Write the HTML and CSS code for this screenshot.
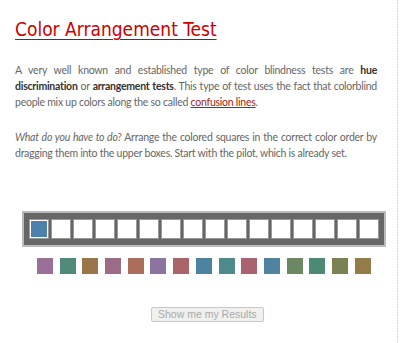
FILE: index.html
```html
<!DOCTYPE html>
<html>
<head>
<meta charset="utf-8">
<link rel="stylesheet" href="styles.css">
</head>
<body>
<div class="page">
  <h1 class="title">Color Arrangement Test</h1>
  <p class="text">A very well known and established type of color blindness tests are <b>hue discrimination</b> or <b>arrangement tests</b>. This type of test uses the fact that colorblind people mix up colors along the so called <a class="link" href="#">confusion lines</a>.</p>
  <p class="text"><i>What do you have to do?</i> Arrange the colored squares in the correct color order by dragging them into the upper boxes. Start with the pilot, which is already set.</p>
  <div class="board">
    <div class="box"><div class="pilot"></div></div>
    <div class="box"></div><div class="box"></div><div class="box"></div><div class="box"></div>
    <div class="box"></div><div class="box"></div><div class="box"></div><div class="box"></div>
    <div class="box"></div><div class="box"></div><div class="box"></div><div class="box"></div>
    <div class="box"></div><div class="box"></div><div class="box"></div>
  </div>
  <div class="squares">
    <div class="sq c1"></div><div class="sq c2"></div><div class="sq c3"></div><div class="sq c4"></div><div class="sq c5"></div>
    <div class="sq c6"></div><div class="sq c7"></div><div class="sq c8"></div><div class="sq c9"></div><div class="sq c10"></div>
    <div class="sq c11"></div><div class="sq c12"></div><div class="sq c13"></div><div class="sq c14"></div><div class="sq c15"></div>
  </div>
  <div class="actions"><button class="btn" disabled>Show me my Results</button></div>
</div>
</body>
</html>
```
FILE: styles.css
```css
html, body { margin: 0; padding: 0; background: #fff; }
.page {
  width: 398px;
  height: 343px;
  box-sizing: border-box;
  border-right: 1px dotted #ccc;
  padding: 0 20px 0 15px;
  font-family: "Lato", "DejaVu Sans", sans-serif;
}
.title {
  margin: 0;
  padding-top: 18px;
  font-family: "DejaVu Sans Condensed", "DejaVu Sans", sans-serif;
  font-weight: normal;
  font-size: 19px;
  line-height: 22px;
  color: #cc0000;
  text-decoration: underline;
  text-decoration-thickness: 1px;
  text-underline-offset: 3px;
}
.text {
  margin: 22px 0 0 0;
  font-size: 10.5px;
  letter-spacing: -0.25px;
  line-height: 16px;
  color: #666;
  text-align: justify;
}
.text + .text { margin-top: 19px; }
.text b { color: #333; font-weight: 700; }
.link { color: #a02020; }
.board {
  margin: 50px 0 0 7px;
  width: 364px;
  box-sizing: border-box;
  border: 2px solid #bbb;
  background: #666;
  padding: 6px 5px;
  display: flex;
  gap: 2px;
}
.box {
  flex: 0 0 20px;
  width: 20px;
  height: 20px;
  box-sizing: border-box;
  background: #fff;
  border: 1px solid #999;
  padding: 1px;
}
.pilot { width: 100%; height: 100%; background: #4b82ad; }
.squares {
  margin: 11px 0 0 22px;
  display: flex;
  gap: 6.7px;
}
.sq { flex: 0 0 16px; width: 16px; height: 16px; }
.c1 { background: #9a6f98; }
.c2 { background: #4f8a7a; }
.c3 { background: #9a7548; }
.c4 { background: #9b6c85; }
.c5 { background: #ab6d5c; }
.c6 { background: #8c73a0; }
.c7 { background: #aa6569; }
.c8 { background: #4e83a0; }
.c9 { background: #4e8a8c; }
.c10 { background: #a8636f; }
.c11 { background: #4f84a0; }
.c12 { background: #6b8763; }
.c13 { background: #4c8a74; }
.c14 { background: #7c8154; }
.c15 { background: #937c4a; }
.actions { margin-top: 33px; display: flex; padding-left: 136px; }
.btn {
  font-family: "Liberation Sans", Arial, sans-serif;
  font-size: 10.5px;
  color: #aaa;
  background: #f0f0ee;
  border: 1px solid #c8c8c8;
  border-radius: 2px;
  padding: 1px 6px;
  height: 15px;
  line-height: 11px;
}
```
